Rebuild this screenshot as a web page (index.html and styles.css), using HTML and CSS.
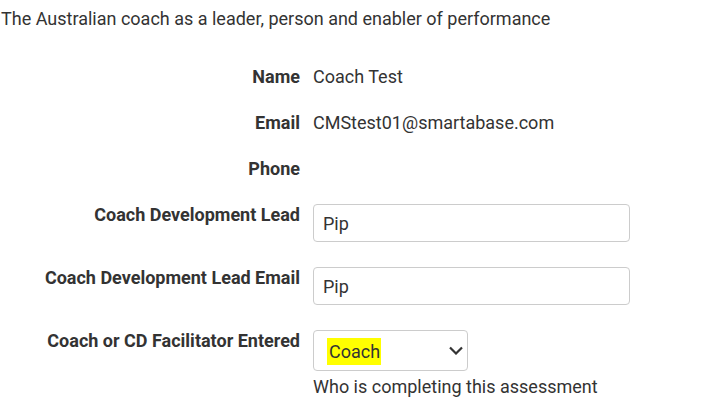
FILE: index.html
```html
<!DOCTYPE html>
<html lang="en">
<head>
<meta charset="utf-8">
<title>Coach assessment</title>
<link rel="stylesheet" href="styles.css">
</head>
<body>
<p class="intro">The Australian coach as a leader, person and enabler of performance</p>
<div class="form">
  <div class="row static">
    <div class="label">Name</div>
    <div class="value">Coach Test</div>
  </div>
  <div class="row static">
    <div class="label">Email</div>
    <div class="value">CMStest01@smartabase.com</div>
  </div>
  <div class="row static">
    <div class="label">Phone</div>
    <div class="value"></div>
  </div>
  <div class="row field">
    <div class="label">Coach Development Lead</div>
    <div class="value"><div class="input">Pip</div></div>
  </div>
  <div class="row field">
    <div class="label">Coach Development Lead Email</div>
    <div class="value"><div class="input">Pip</div></div>
  </div>
  <div class="row field">
    <div class="label">Coach or CD Facilitator Entered</div>
    <div class="value">
      <div class="select"><span class="hl">Coach</span>
        <svg class="chev" width="14" height="9" viewBox="0 0 14 9"><path d="M1 1.5 L7 7.5 L13 1.5" fill="none" stroke="#333" stroke-width="2.2"/></svg>
      </div>
      <div class="help">Who is completing this assessment</div>
    </div>
  </div>
</div>
</body>
</html>
```
FILE: styles.css
```css
html, body {
  margin: 0;
  padding: 0;
  background: #fff;
}
body {
  font-family: Roboto, "Liberation Sans", sans-serif;
  font-size: 18px;
  line-height: 24px;
  color: #333;
}
.intro {
  margin: 0;
  padding: 7px 0 0 1px;
}
.form {
  margin-top: 34px;
}
.row {
  display: grid;
  grid-template-columns: 300px 317px;
  column-gap: 13px;
  align-items: start;
}
.row.static {
  margin-bottom: 22px;
}
.row.field {
  margin-bottom: 24px;
}
.label {
  font-weight: 700;
  text-align: right;
}
.input {
  box-sizing: border-box;
  margin-top: 1px;
  height: 38px;
  border: 1px solid #ccc;
  border-radius: 4px;
  padding: 7px 9px 0;
  background: #fff;
}
.select {
  box-sizing: border-box;
  margin-top: 1px;
  width: 155px;
  height: 41px;
  border: 1px solid #ccc;
  border-radius: 4px;
  display: flex;
  align-items: center;
  justify-content: space-between;
  padding: 1px 4px 0 13px;
}
.hl {
  background: #ffff00;
  line-height: 27px;
  padding: 0 1px 0 2px;
}
.chev {
  margin-top: -2px;
}
.help {
  margin-top: 4px;
}
```
